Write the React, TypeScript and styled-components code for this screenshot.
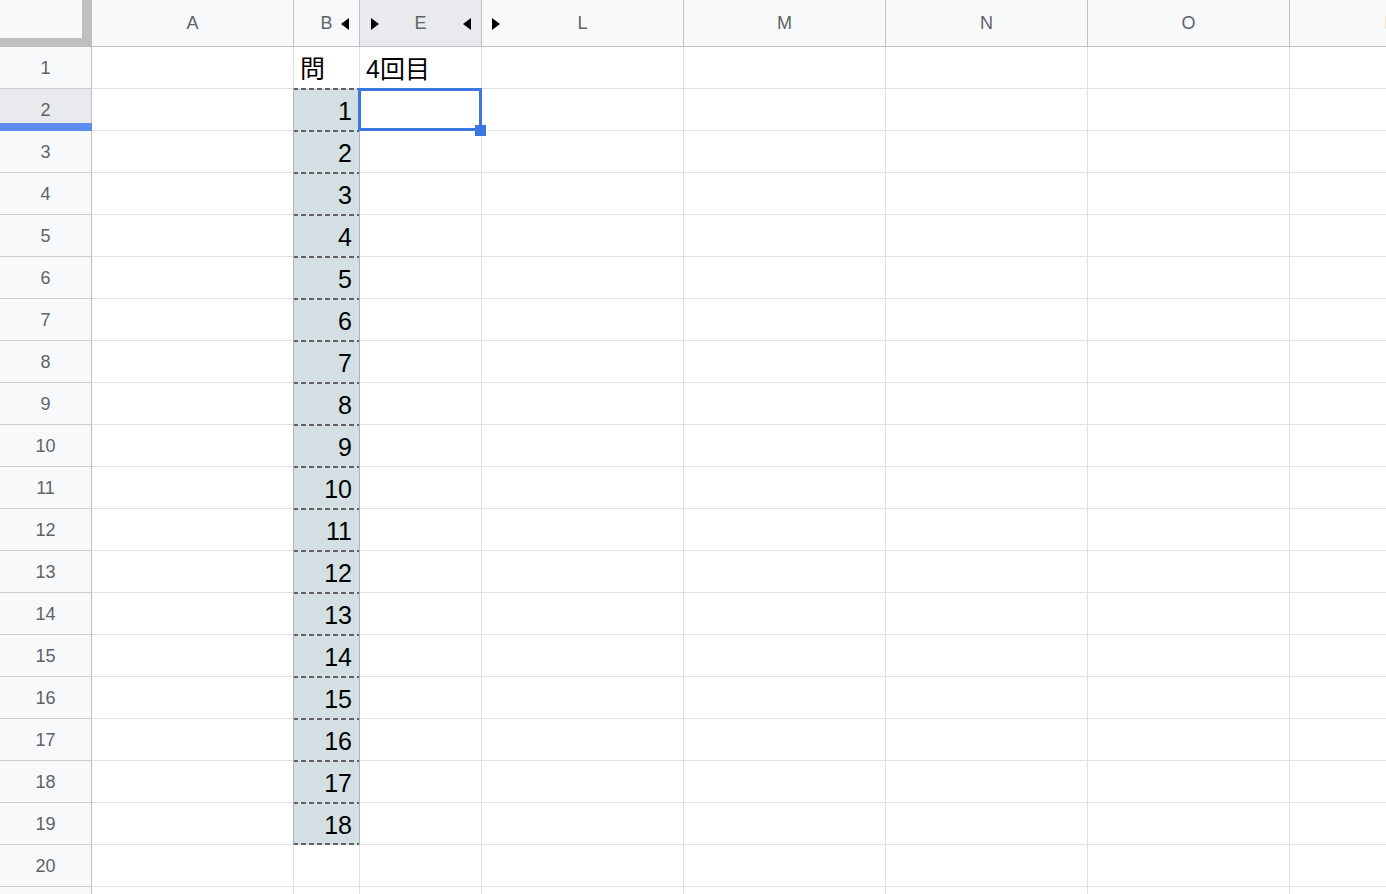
import React from 'react';
import styled, { createGlobalStyle } from 'styled-components';

const GlobalStyle = createGlobalStyle`
  html, body {
    margin: 0;
    padding: 0;
    background: #ffffff;
    overflow: hidden;
  }
  body {
    font-family: "Liberation Sans", Arial, "Noto Sans CJK JP", sans-serif;
  }
`;

const Sheet = styled.div`
  display: grid;
  grid-template-columns: 92px 202px 66px 122px repeat(5, 202px);
  grid-template-rows: 47px;
  grid-auto-rows: 42px;
  width: max-content;
`;

const Corner = styled.div`
  box-sizing: border-box;
  background: #f8f9fa;
  border-right: 10px solid #bfbfbf;
  border-bottom: 9px solid #bfbfbf;
`;

const ColHeader = styled.div<{ $selected?: boolean }>`
  position: relative;
  box-sizing: border-box;
  display: flex;
  align-items: center;
  justify-content: center;
  background: ${(p) => (p.$selected ? '#e8eaed' : '#f8f9fa')};
  border-right: 1px solid #c0c0c0;
  border-bottom: 1px solid #c0c0c0;
  color: #5f6368;
  font-size: 18px;
  line-height: 18px;
`;

const RowHeader = styled.div<{ $selected?: boolean }>`
  position: relative;
  box-sizing: border-box;
  display: flex;
  align-items: center;
  justify-content: center;
  background: ${(p) => (p.$selected ? '#e8eaed' : '#f8f9fa')};
  border-right: 1px solid #c0c0c0;
  border-bottom: 1px solid #cacaca;
  color: #5f6368;
  font-size: 18px;
  line-height: 18px;
  ${(p) =>
    p.$selected
      ? `&::after {
    content: '';
    position: absolute;
    left: 0;
    right: -1px;
    bottom: -1px;
    height: 8px;
    background: #5b8def;
  }`
      : ''}
`;

const Arrow = styled.svg<{ $side: 'left' | 'right'; $offset: number }>`
  position: absolute;
  top: 18px;
  ${(p) => p.$side}: ${(p) => p.$offset}px;
  width: 8px;
  height: 12px;
`;

const Cell = styled.div<{ $align?: 'left' | 'right' }>`
  position: relative;
  box-sizing: border-box;
  display: flex;
  align-items: flex-end;
  justify-content: ${(p) => (p.$align === 'right' ? 'flex-end' : 'flex-start')};
  padding: 0 7px 6px 6px;
  border-right: 1px solid #e2e2e2;
  border-bottom: 1px solid #e2e2e2;
  background: #ffffff;
  color: #000000;
  font-size: 25px;
  line-height: 25px;
  white-space: nowrap;
`;

const dash = 'repeating-linear-gradient(to right, #5f6164 0 5px, transparent 5px 8px)';

const RangeCell = styled(Cell)<{ $last?: boolean }>`
  background: #d3dfe2;
  &::before {
    content: '';
    position: absolute;
    top: -1px;
    bottom: -1px;
    left: -1px;
    right: -1px;
    border-left: 1px solid #abb6b9;
    border-right: 1px solid #abb6b9;
    background-image: ${(p) => (p.$last ? `${dash}, ${dash}` : dash)};
    background-origin: border-box;
    background-size: 100% 2px;
    background-repeat: no-repeat;
    background-position: ${(p) => (p.$last ? 'left top, left bottom' : 'left top')};
    pointer-events: none;
  }
`;

const SelectionBox = styled.div`
  position: absolute;
  top: -1px;
  left: -2px;
  right: -1px;
  bottom: -1px;
  border: 3px solid #3a77e0;
  z-index: 2;
  pointer-events: none;
`;

const FillHandle = styled.div`
  position: absolute;
  right: -5px;
  bottom: -6px;
  width: 11px;
  height: 11px;
  background: #3a77e0;
  z-index: 3;
`;

const LeftArrow = ({ offset }: { offset: number }) => (
  <Arrow $side="right" $offset={offset} viewBox="0 0 8 12">
    <polygon points="8,0 8,12 0,6" fill="#000" />
  </Arrow>
);

const RightArrow = ({ offset }: { offset: number }) => (
  <Arrow $side="left" $offset={offset} viewBox="0 0 8 12">
    <polygon points="0,0 0,12 8,6" fill="#000" />
  </Arrow>
);

const ROWS = 21;
const OTHER_COLS = ['L', 'M', 'N', 'O', 'P'];

export default function App() {
  const rows: React.ReactNode[] = [];
  for (let r = 1; r <= ROWS; r++) {
    const inRange = r >= 2 && r <= 19;
    rows.push(
      <RowHeader key={`h${r}`} $selected={r === 2}>
        {r}
      </RowHeader>
    );
    rows.push(<Cell key={`a${r}`} />);
    if (inRange) {
      rows.push(
        <RangeCell key={`b${r}`} $align="right" $last={r === 19}>
          {r - 1}
        </RangeCell>
      );
    } else {
      rows.push(<Cell key={`b${r}`}>{r === 1 ? '問' : ''}</Cell>);
    }
    if (r === 2) {
      rows.push(
        <Cell key={`e${r}`}>
          <SelectionBox />
          <FillHandle />
        </Cell>
      );
    } else {
      rows.push(<Cell key={`e${r}`}>{r === 1 ? '4回目' : ''}</Cell>);
    }
    OTHER_COLS.forEach((c) => rows.push(<Cell key={`${c}${r}`} />));
  }

  return (
    <>
      <GlobalStyle />
      <Sheet>
        <Corner />
        <ColHeader>A</ColHeader>
        <ColHeader>
          B
          <LeftArrow offset={10} />
        </ColHeader>
        <ColHeader $selected>
          <RightArrow offset={11} />
          E
          <LeftArrow offset={10} />
        </ColHeader>
        <ColHeader>
          <RightArrow offset={10} />
          L
        </ColHeader>
        {OTHER_COLS.slice(1).map((c) => (
          <ColHeader key={c}>{c}</ColHeader>
        ))}
        {rows}
      </Sheet>
    </>
  );
}
